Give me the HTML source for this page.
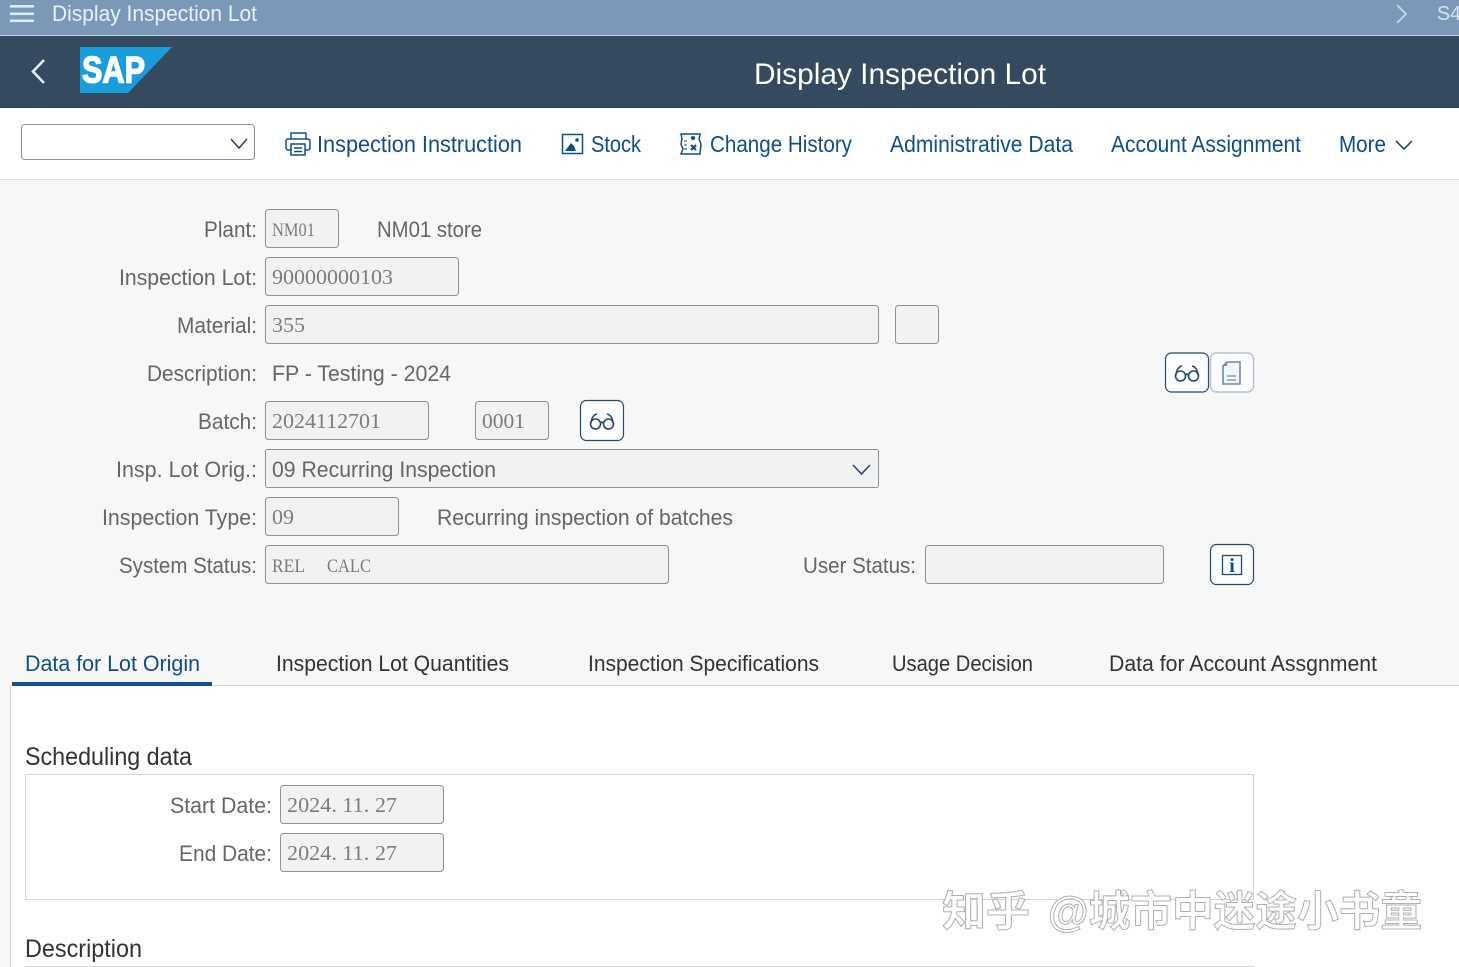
<!DOCTYPE html>
<html><head><meta charset="utf-8"><title>Display Inspection Lot</title>
<style>
html,body{margin:0;padding:0;background:#f7f7f7;width:1459px;height:967px;overflow:hidden}
svg{display:block}
text{font-family:"Liberation Sans","Noto Sans CJK SC",sans-serif;white-space:pre}
.l{font-size:22px;fill:#666;text-anchor:start}
.v{font-size:22px;fill:#666}
.i{font-family:"Liberation Serif","Noto Serif CJK SC",serif;font-size:21px;fill:#7c7c7c}
.n{font-size:23px;fill:#0f4f88}
.t{font-size:22px;fill:#333}
.h{font-size:25px;fill:#333}
.f{fill:#f2f2f2;stroke:#8e9196;stroke-width:1}
.b{fill:#fbfdff;stroke:#27496b;stroke-width:1.2}
.s{fill:none;stroke:#27496b;stroke-width:1.6}
.n2{fill:none;stroke:#0f4f88;stroke-width:1.5}
</style></head><body>
<svg width="1459" height="967" viewBox="0 0 1459 967" xmlns="http://www.w3.org/2000/svg">
<rect width="1459" height="967" fill="#f7f7f7"/>
<rect width="1459" height="36" fill="#7b98b8"/>
<rect y="35" width="1459" height="1" fill="#c3d0de"/>
<rect y="36" width="1459" height="72" fill="#354a5f"/>
<g fill="#dcebf8"><rect x="10" y="5" width="24" height="2.6"/><rect x="10" y="12.500" width="24" height="2.600"/><rect x="10" y="19.500" width="24" height="2.600"/></g>
<text x="52" y="21" font-size="22" fill="#e8f1f8" textLength="205" lengthAdjust="spacingAndGlyphs">Display Inspection Lot</text>
<path d="M1397 5l9 9-9 9" fill="none" stroke="#c9dcec" stroke-width="1.6"/>
<text x="1437" y="20" font-size="20" fill="#d5e4f1" textLength="24" lengthAdjust="spacingAndGlyphs">S4</text>
<path d="M44 60L33 71.500L44 83" fill="none" stroke="#e3edf5" stroke-width="2.600"/>
<path d="M80 47H172L128 93H80Z" fill="#1a9ddb"/>
<text x="82" y="82.500" font-size="37" font-weight="700" fill="#fff" stroke="#fff" stroke-width="1.400" textLength="63" lengthAdjust="spacingAndGlyphs">SAP</text>
<text x="754" y="84" font-size="30" fill="#fff" textLength="292" lengthAdjust="spacingAndGlyphs">Display Inspection Lot</text>

<rect y="108" width="1459" height="71" fill="#fff"/>
<rect y="179" width="1459" height="1" fill="#dcdcdc"/>
<rect x="21.500" y="124.500" width="233" height="35" rx="3" fill="#fff" stroke="#8e9196"/>
<path d="M231 139l8 9 8-9" class="s"/>
<g class="n2"><path d="M291 139v-6h15v6M291 150h-3a2 2 0 0 1-2-2v-7a2 2 0 0 1 2-2h20a2 2 0 0 1 2 2v7a2 2 0 0 1-2 2h-3"/><rect x="291" y="144" width="14" height="11"/><path d="M294 148h8M294 151.500h8"/></g>
<text x="317" y="152" class="n" textLength="205" lengthAdjust="spacingAndGlyphs">Inspection Instruction</text>
<rect x="562.500" y="134.500" width="20" height="19" fill="#fff" stroke="#0f4f88" stroke-width="1.500"/>
<path d="M565 151l6-8 3 3 2 5z" fill="#0f4f88"/><circle cx="577" cy="140" r="1.800" fill="#0f4f88"/>
<text x="591" y="152" class="n" textLength="50" lengthAdjust="spacingAndGlyphs">Stock</text>
<g class="n2"><path d="M681 134h19l-1 5 2 5-1 10h-19l2-5-2-5 1-5z"/><path d="M684 141h3M684 145h3M684 149h3" stroke-width="1"/></g>
<circle cx="693" cy="138" r="2" fill="#0f4f88"/><path d="M691 145l5 5M696 145l-5 5" stroke="#0f4f88" stroke-width="2.200"/>
<text x="710" y="152" class="n" textLength="142" lengthAdjust="spacingAndGlyphs">Change History</text>
<text x="890" y="152" class="n" textLength="183" lengthAdjust="spacingAndGlyphs">Administrative Data</text>
<text x="1111" y="152" class="n" textLength="190" lengthAdjust="spacingAndGlyphs">Account Assignment</text>
<text x="1339" y="152" class="n" textLength="47" lengthAdjust="spacingAndGlyphs">More</text>
<path d="M1396 141l8 8 8-8" class="s"/>

<text x="204" y="237" class="l" textLength="53" lengthAdjust="spacingAndGlyphs">Plant:</text>
<rect x="265.500" y="209.500" width="73" height="38" rx="3" class="f"/>
<text x="272" y="236" class="i" font-size="19" style="font-size:19px" textLength="43" lengthAdjust="spacingAndGlyphs">NM01</text>
<text x="377" y="237" class="v" textLength="105" lengthAdjust="spacingAndGlyphs">NM01 store</text>

<text x="119" y="285" class="l" textLength="138" lengthAdjust="spacingAndGlyphs">Inspection Lot:</text>
<rect x="265.500" y="257.500" width="193" height="38" rx="3" class="f"/>
<text x="272" y="284" class="i" textLength="121" lengthAdjust="spacingAndGlyphs">90000000103</text>

<text x="177" y="333" class="l" textLength="80" lengthAdjust="spacingAndGlyphs">Material:</text>
<rect x="265.500" y="305.500" width="613" height="38" rx="3" class="f"/>
<text x="272" y="332" class="i" textLength="33" lengthAdjust="spacingAndGlyphs">355</text>
<rect x="895.500" y="305.500" width="43" height="38" rx="3" class="f"/>

<text x="147" y="381" class="l" textLength="110" lengthAdjust="spacingAndGlyphs">Description:</text>
<text x="272" y="381" class="v" textLength="179" lengthAdjust="spacingAndGlyphs">FP - Testing - 2024</text>
<rect x="1165.500" y="353" width="43" height="39" rx="6" class="b"/>
<g class="s"><circle cx="1180.500" cy="376" r="5"/><circle cx="1193.500" cy="376" r="5"/><path d="M1185.500 375q1.500-1.500 3 0M1176 375q1-8 6-9M1198 375q-1-8-6-9"/></g>
<rect x="1210.500" y="353" width="43" height="39" rx="6" fill="#fbfcfd" stroke="#b4c1cf" stroke-width="1.400"/>
<path d="M1227 362h13v22h-17v-18z" fill="#f2f6fa" stroke="#6f8ba8" stroke-width="1.600"/><path d="M1223 366l4-4v4z" fill="#6f8ba8"/><path d="M1227 376h9M1227 380h9" stroke="#6f8ba8" stroke-width="1.200"/>

<text x="198" y="429" class="l" textLength="59" lengthAdjust="spacingAndGlyphs">Batch:</text>
<rect x="265.500" y="401.500" width="163" height="38" rx="3" class="f"/>
<text x="272" y="428" class="i" textLength="109" lengthAdjust="spacingAndGlyphs">2024112701</text>
<rect x="475.500" y="401.500" width="73" height="38" rx="3" class="f"/>
<text x="482" y="428" class="i" textLength="43" lengthAdjust="spacingAndGlyphs">0001</text>
<rect x="580.500" y="400.500" width="43" height="40" rx="6" class="b"/>
<g class="s"><circle cx="595.500" cy="424" r="5"/><circle cx="608.500" cy="424" r="5"/><path d="M600.500 423q1.500-1.500 3 0M591 423q1-8 6-9M613 423q-1-8-6-9"/></g>

<text x="116" y="477" class="l" textLength="141" lengthAdjust="spacingAndGlyphs">Insp. Lot Orig.:</text>
<rect x="265.500" y="449.500" width="613" height="38" rx="2" class="f"/>
<text x="272" y="477" class="v" textLength="224" lengthAdjust="spacingAndGlyphs">09 Recurring Inspection</text>
<path d="M853 465l8.500 9 8.500-9" class="s"/>

<text x="102" y="525" class="l" textLength="155" lengthAdjust="spacingAndGlyphs">Inspection Type:</text>
<rect x="265.500" y="497.500" width="133" height="38" rx="3" class="f"/>
<text x="272" y="524" class="i" textLength="22" lengthAdjust="spacingAndGlyphs">09</text>
<text x="437" y="525" class="v" textLength="296" lengthAdjust="spacingAndGlyphs">Recurring inspection of batches</text>

<text x="119" y="573" class="l" textLength="138" lengthAdjust="spacingAndGlyphs">System Status:</text>
<rect x="265.500" y="545.500" width="403" height="38" rx="3" class="f"/>
<text x="272" y="572" class="i" style="font-size:19px" textLength="33" lengthAdjust="spacingAndGlyphs">REL</text>
<text x="327" y="572" class="i" style="font-size:19px" textLength="44" lengthAdjust="spacingAndGlyphs">CALC</text>
<text x="803" y="573" class="l" textLength="113" lengthAdjust="spacingAndGlyphs">User Status:</text>
<rect x="925.500" y="545.500" width="238" height="38" rx="3" class="f"/>
<rect x="1210.500" y="544.500" width="43" height="40" rx="6" class="b"/>
<rect x="1222.500" y="555.500" width="19" height="19" fill="#fbfdff" stroke="#27496b" stroke-width="1.300"/>
<text x="1232" y="572" text-anchor="middle" font-size="20" font-weight="700" fill="#0f4f88" style="font-family:'Liberation Serif',serif">i</text>

<rect x="11" y="686" width="1448" height="281" fill="#fff"/>
<rect x="10" y="685" width="1449" height="1" fill="#d4d4d4"/>
<rect x="10" y="685" width="1" height="282" fill="#d4d4d4"/>
<rect x="12" y="682" width="200" height="4" fill="#0f5296"/>
<text x="25" y="671" font-size="22" fill="#0f4f88" textLength="175" lengthAdjust="spacingAndGlyphs">Data for Lot Origin</text>
<text x="276" y="671" class="t" textLength="233" lengthAdjust="spacingAndGlyphs">Inspection Lot Quantities</text>
<text x="588" y="671" class="t" textLength="231" lengthAdjust="spacingAndGlyphs">Inspection Specifications</text>
<text x="892" y="671" class="t" textLength="141" lengthAdjust="spacingAndGlyphs">Usage Decision</text>
<text x="1109" y="671" class="t" textLength="268" lengthAdjust="spacingAndGlyphs">Data for Account Assgnment</text>

<text x="25" y="765" class="h" textLength="167" lengthAdjust="spacingAndGlyphs">Scheduling data</text>
<rect x="25.500" y="774.500" width="1228" height="125" fill="#fff" stroke="#d4d4d4"/>
<text x="170" y="813" class="l" textLength="102" lengthAdjust="spacingAndGlyphs">Start Date:</text>
<rect x="280.500" y="785.500" width="163" height="38" rx="3" class="f"/>
<text x="287" y="812" class="i" textLength="110" lengthAdjust="spacingAndGlyphs">2024. 11. 27</text>
<text x="179" y="861" class="l" textLength="93" lengthAdjust="spacingAndGlyphs">End Date:</text>
<rect x="280.500" y="833.500" width="163" height="38" rx="3" class="f"/>
<text x="287" y="860" class="i" textLength="110" lengthAdjust="spacingAndGlyphs">2024. 11. 27</text>
<text x="25" y="957" class="h" textLength="117" lengthAdjust="spacingAndGlyphs">Description</text>
<rect x="25" y="966" width="1229" height="1" fill="#d4d4d4"/>

<text x="942" y="926" font-size="42" font-weight="700" fill="#fff" stroke="#b0b0b0" stroke-width="1" textLength="88" lengthAdjust="spacingAndGlyphs">知乎</text>
<text x="1048" y="926" font-size="42" font-weight="700" fill="#fff" stroke="#b0b0b0" stroke-width="1" textLength="374" lengthAdjust="spacingAndGlyphs">@城市中迷途小书童</text>
</svg>
</body></html>
